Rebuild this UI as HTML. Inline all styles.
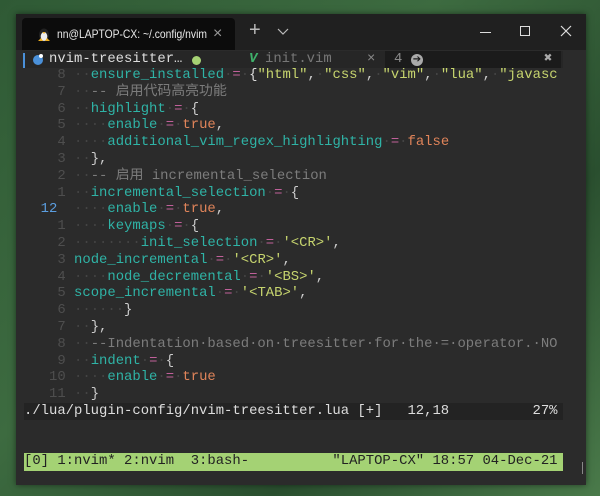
<!DOCTYPE html>
<html><head><meta charset="utf-8"><style>
*{margin:0;padding:0;box-sizing:border-box}
body{width:600px;height:496px;overflow:hidden;background:linear-gradient(135deg,#2f5a35,#3d6b40 40%,#2a4f2f 70%,#4a7a4a);position:relative;font-family:"Liberation Mono","Noto Sans CJK SC",monospace}
#win{position:absolute;left:16px;top:14px;width:570px;height:471px;background:#2b2b2b;box-shadow:0 0 6px rgba(0,0,0,.5)}
#title{position:absolute;left:0;top:0;width:570px;height:36px;background:#202020}
#tab{position:absolute;left:6px;top:4px;width:213px;height:32px;background:#0c0c0c;border-radius:4px 4px 0 0;font-family:"Liberation Sans",sans-serif;color:#e8e8e8;font-size:12px}
.ui{position:absolute;font-family:"Liberation Sans",sans-serif;color:#ccc}
.r{position:absolute;left:24px;height:17px;line-height:17px;font-size:13.9px;white-space:pre;color:#ccc}
.n{color:#4e4e4e}.d{color:#444}.i{color:#2fb3a6}.o{color:#c0609a}.t{color:#e0845a}.s{color:#c6d46e}.c{color:#7c7c7c}.w{color:#ddd}
</style></head><body>
<div id="win">
 <div id="title">
  <div id="tab">
   <svg style="position:absolute;left:15px;top:9px" width="14" height="15" viewBox="0 0 14 15"><ellipse cx="7" cy="8" rx="5" ry="6.5" fill="#222"/><ellipse cx="7" cy="9.5" rx="3.3" ry="4.5" fill="#eee"/><path d="M1 14 L4 11 L6 14Z M13 14 L10 11 L8 14Z" fill="#f0b020"/><path d="M5.5 5 L8.5 5 L7 7Z" fill="#f0b020"/></svg>
   <span style="position:absolute;left:35px;top:9px;transform:scaleX(0.86);transform-origin:left">nn@LAPTOP-CX: ~/.config/nvim</span>
   <span style="position:absolute;left:191px;top:7px;font-size:16px;color:#999">×</span>
  </div>
  <span class="ui" style="left:233px;top:5px;font-size:20px;color:#bbb">+</span>
  <svg style="position:absolute;left:261px;top:14px" width="12" height="8"><path d="M1 1 L6 6 L11 1" stroke="#bbb" fill="none" stroke-width="1.2"/></svg>
  <div style="position:absolute;left:464px;top:18px;width:11px;height:1px;background:#ddd"></div>
  <div style="position:absolute;left:504px;top:12px;width:10px;height:10px;border:1px solid #ddd"></div>
  <svg style="position:absolute;left:544px;top:11px" width="12" height="12"><path d="M1 1L11 11M11 1L1 11" stroke="#ddd" stroke-width="1.2"/></svg>
 </div>
 <div style="position:absolute;left:8px;top:37px;width:539px;height:17px;background:#262626"></div>
 <div style="position:absolute;left:369px;top:37px;width:176px;height:17px;background:#1b1b1b"></div>
 <div style="position:absolute;left:8px;top:389px;width:539px;height:17px;background:#232323"></div>
 <div style="position:absolute;left:8px;top:439px;width:539px;height:18px;background:#a4d274"></div>
 <div style="position:absolute;left:566px;top:448px;width:1px;height:12px;background:#888"></div>
</div>
<div style="position:absolute;left:23px;top:53px;width:2px;height:15px;background:#4a90d9"></div>
<div style="position:absolute;left:33px;top:55px;width:10px;height:10px;border-radius:50%;background:#4a90d9"></div>
<div style="position:absolute;left:39px;top:54px;width:4px;height:4px;border-radius:50%;background:#fff"></div>
<div class="r w" style="top:51px;left:49px">nvim-treesitter…</div>
<div style="position:absolute;left:192px;top:56px;width:9px;height:9px;border-radius:50%;background:#a6d274"></div>
<div class="r" style="top:51px;left:249px;color:#3fb16b;font-weight:bold;font-style:italic">V</div>
<div class="r" style="top:51px;left:265px;color:#777">init.vim</div>
<div class="r" style="top:51px;left:367px;color:#888">×</div>
<div class="r" style="top:51px;left:394px;color:#888">4</div>
<div style="position:absolute;left:411px;top:54px;width:12px;height:12px;border-radius:50%;background:#aaa;color:#1b1b1b;font-size:10px;line-height:12px;text-align:center;font-family:'DejaVu Sans'">➔</div>
<div class="r" style="top:51px;left:544px;color:#aaa;font-weight:bold">✖</div>

<div class="r" style="top:67px"><span class="n">    8</span> <span class="d">··</span><span class="i">ensure_installed</span><span class="d">·</span><span class="o">=</span><span class="d">·</span><span class="w">{</span><span class="s">"html"</span>,<span class="d">·</span><span class="s">"css"</span>,<span class="d">·</span><span class="s">"vim"</span>,<span class="d">·</span><span class="s">"lua"</span>,<span class="d">·</span><span class="s">"javasc</span></div>
<div class="r" style="top:84px"><span class="n">    7</span> <span class="d">··</span><span class="c">-- 启用代码高亮功能</span></div>
<div class="r" style="top:101px"><span class="n">    6</span> <span class="d">··</span><span class="i">highlight</span><span class="d">·</span><span class="o">=</span><span class="d">·</span>{</div>
<div class="r" style="top:117px"><span class="n">    5</span> <span class="d">····</span><span class="i">enable</span><span class="d">·</span><span class="o">=</span><span class="d">·</span><span class="t">true</span>,</div>
<div class="r" style="top:134px"><span class="n">    4</span> <span class="d">····</span><span class="i">additional_vim_regex_highlighting</span><span class="d">·</span><span class="o">=</span><span class="d">·</span><span class="t">false</span></div>
<div class="r" style="top:151px"><span class="n">    3</span> <span class="d">··</span>},</div>
<div class="r" style="top:168px"><span class="n">    2</span> <span class="d">··</span><span class="c">-- 启用 incremental_selection</span></div>
<div class="r" style="top:185px"><span class="n">    1</span> <span class="d">··</span><span class="i">incremental_selection</span><span class="d">·</span><span class="o">=</span><span class="d">·</span>{</div>
<div class="r" style="top:201px"><span style="color:#5b9ee0">  12</span>  <span class="d">····</span><span class="i">enable</span><span class="d">·</span><span class="o">=</span><span class="d">·</span><span class="t">true</span>,</div>
<div class="r" style="top:218px"><span class="n">    1</span> <span class="d">····</span><span class="i">keymaps</span><span class="d">·</span><span class="o">=</span><span class="d">·</span>{</div>
<div class="r" style="top:235px"><span class="n">    2</span> <span class="d">········</span><span class="i">init_selection</span><span class="d">·</span><span class="o">=</span><span class="d">·</span><span class="s">'&lt;CR&gt;'</span>,</div>
<div class="r" style="top:252px"><span class="n">    3</span> <span class="i">node_incremental</span><span class="d">·</span><span class="o">=</span><span class="d">·</span><span class="s">'&lt;CR&gt;'</span>,</div>
<div class="r" style="top:269px"><span class="n">    4</span> <span class="d">····</span><span class="i">node_decremental</span><span class="d">·</span><span class="o">=</span><span class="d">·</span><span class="s">'&lt;BS&gt;'</span>,</div>
<div class="r" style="top:285px"><span class="n">    5</span> <span class="i">scope_incremental</span><span class="d">·</span><span class="o">=</span><span class="d">·</span><span class="s">'&lt;TAB&gt;'</span>,</div>
<div class="r" style="top:302px"><span class="n">    6</span> <span class="d">······</span>}</div>
<div class="r" style="top:319px"><span class="n">    7</span> <span class="d">··</span>},</div>
<div class="r" style="top:336px"><span class="n">    8</span> <span class="d">··</span><span class="c">--Indentation·based·on·treesitter·for·the·=·operator.·NO</span></div>
<div class="r" style="top:353px"><span class="n">    9</span> <span class="d">··</span><span class="i">indent</span><span class="d">·</span><span class="o">=</span><span class="d">·</span>{</div>
<div class="r" style="top:369px"><span class="n">   10</span> <span class="d">····</span><span class="i">enable</span><span class="d">·</span><span class="o">=</span><span class="d">·</span><span class="t">true</span></div>
<div class="r" style="top:386px"><span class="n">   11</span> <span class="d">··</span>}</div>
<div class="r w" style="top:403px">./lua/plugin-config/nvim-treesitter.lua [+]   12,18          27%</div>
<div class="r" style="top:453px;color:#222">[0] 1:nvim* 2:nvim  3:bash-          "LAPTOP-CX" 18:57 04-Dec-21</div>
</body></html>
